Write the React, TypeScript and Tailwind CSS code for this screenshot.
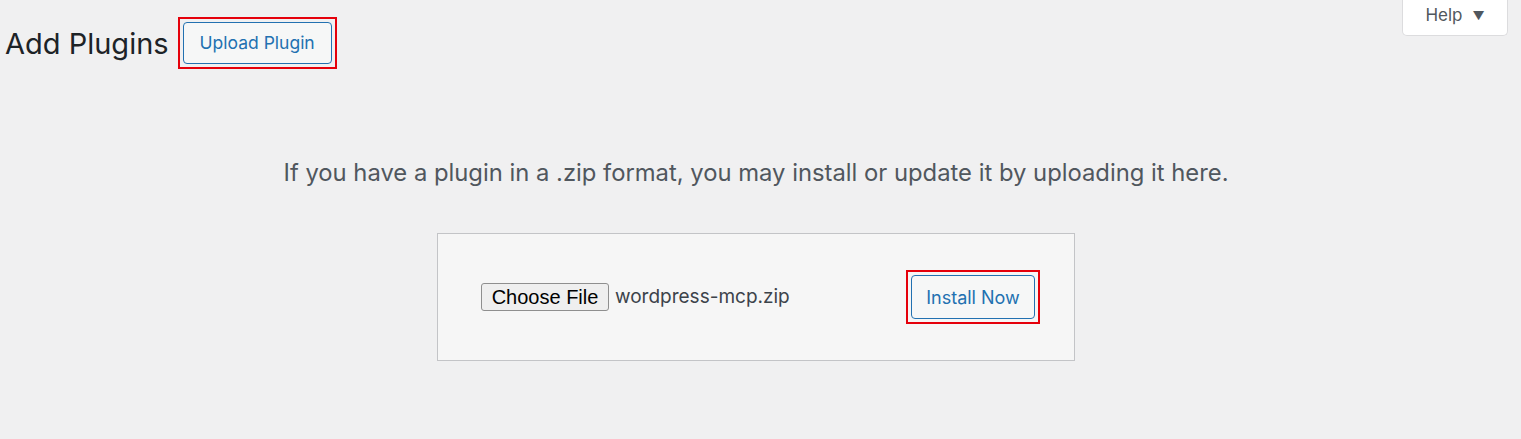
export default function App() {
  return (
    <div className="min-h-[439px] w-full bg-[#f0f0f1] font-['Inter','Noto_Sans',sans-serif] text-[#1d2327]">
      <div className="flex justify-end pr-[13px]">
        <button
          type="button"
          className="flex h-[36px] w-[106px] items-center justify-center gap-[10px] rounded-b-[5px] border border-t-0 border-[#dcdcde] bg-white pb-[3px] text-[17px] text-[#50575e]"
        >
          Help
          <span className="text-[12px]">▼</span>
        </button>
      </div>

      <div className="-mt-[19px] flex items-center gap-[9px] pl-[5px]">
        <h1 className="text-[29px] font-normal leading-none">Add Plugins</h1>
        <div className="border-2 border-[#e5000b] p-[3px]">
          <button
            type="button"
            className="flex h-[42px] w-[149px] items-center justify-center rounded-[4px] border border-[#2271b1] bg-[#f6f7f7] text-[17.5px] text-[#2271b1]"
          >
            Upload Plugin
          </button>
        </div>
      </div>

      <div className="flex flex-col items-center pr-[9px]">
        <p className="mt-[88px] text-[23.8px] leading-[32px] text-[#50575e]">
          If you have a plugin in a .zip format, you may install or update it by uploading it here.
        </p>

        <div className="mt-[44px] flex h-[128px] w-[638px] items-center justify-between border border-[#c3c4c7] bg-[#f6f6f6] pl-[43px] pr-[34px]">
          <div className="flex items-center gap-[6px]">
            <span className="flex h-[28px] w-[128px] items-center justify-center rounded-[3px] border border-[#8f8f8f] bg-[#efefef] font-['Liberation_Sans',sans-serif] text-[20px] text-black">
              Choose File
            </span>
            <span className="text-[19px] text-[#3c434a]">wordpress-mcp.zip</span>
          </div>
          <div className="border-2 border-[#e5000b] p-[3px]">
            <button
              type="button"
              className="flex h-[44px] w-[124px] items-center justify-center rounded-[4px] border border-[#2271b1] bg-[#f6f7f7] text-[18px] text-[#2271b1]"
            >
              Install Now
            </button>
          </div>
        </div>
      </div>
    </div>
  );
}
